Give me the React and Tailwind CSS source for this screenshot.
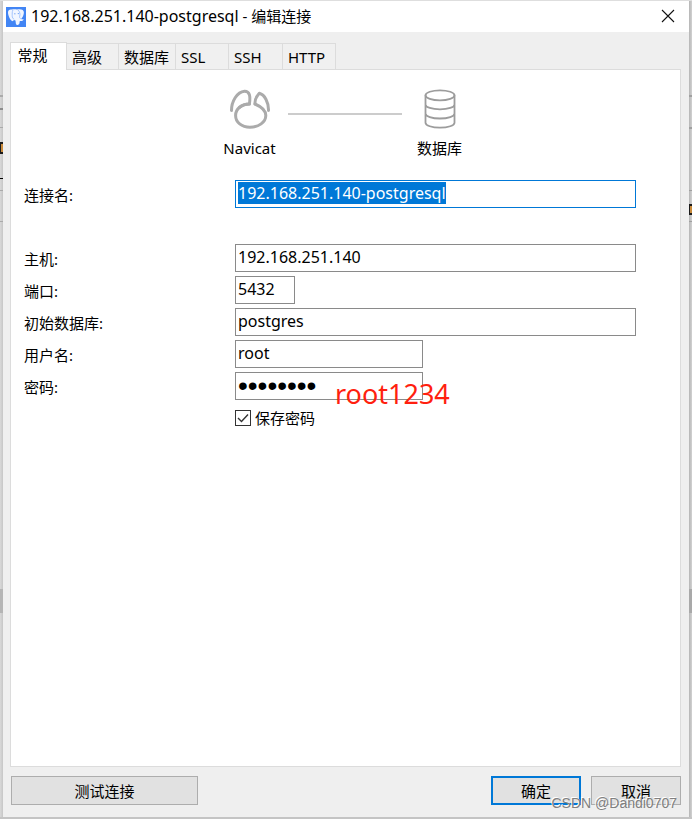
import React, { useEffect, useRef, useState } from "react";

const tabs = [
  { name: "高级", className: "w-[52px]" },
  { name: "数据库", className: "w-[57px]" },
  { name: "SSL", className: "w-[53px]" },
  { name: "SSH", className: "w-[54px]" },
  { name: "HTTP", className: "w-[53px]" },
];

const field =
  "h-7 border border-[#8a8a8a] bg-white pb-[2px] pl-[2px] text-[16px] leading-5 outline-none focus:border-[#0078d7] selection:bg-[#0078d7] selection:text-white";

const Row = ({ id, label, children }) => (
  <div className="flex items-center">
    <label htmlFor={id} className="w-[211px] shrink-0 pt-[2px]">
      {label}
    </label>
    {children}
  </div>
);

const ElephantIcon = () => (
  <svg width="20" height="20" viewBox="0 0 20 20" aria-hidden="true">
    <rect width="20" height="20" fill="#4285f4" />
    <path
      d="M2 5.5C2 3 3.6 2.2 6 2.6C7.8 2.1 9.6 2.1 11 2.6C14.5 1.8 18.2 2.5 17.9 5.8C17.6 8.6 16.4 10.8 15.2 12C16 12.6 17 12.3 17.8 12.2C17.2 13.8 15.4 14.3 13.8 14L13.4 16.6C13 18.4 10.3 18.5 9.9 16.8L9.5 13.4L8 13L6.6 14.2C4.2 13.4 2 8.5 2 5.5Z"
      fill="#f1f6ff"
    />
    <path
      d="M6.9 3C5.9 5 6.3 7 6.2 8.5C6.1 10.4 7 11.8 8.2 12.4M12 3C14 4.6 14.3 7.4 13.7 9.2C13.3 10.6 14 11.3 14.8 11.8"
      fill="none"
      stroke="#8fb7fb"
      strokeWidth="0.8"
    />
    <path d="M8.3 6.8h1.1M11.8 6.6h1" stroke="#4285f4" strokeWidth="0.9" />
  </svg>
);

const NavicatIcon = () => (
  <svg
    width="42"
    height="40"
    viewBox="0 0 42 40"
    fill="none"
    stroke="#ababab"
    strokeWidth="3"
    strokeLinecap="round"
    strokeLinejoin="round"
    aria-hidden="true"
  >
    <path d="M2.5 21.5C2.4 12.5 8 2.8 15.5 2.2C20.8 2 21.6 7.5 20.4 14.9C16.5 15 13 16.2 10.6 18.4" />
    <path d="M20.4 14.9C12.5 14.9 6.6 20 6.6 26.5C6.6 33.3 12.6 38.2 21 38.2C29.6 38.2 36.8 33.2 36.8 26.5C36.8 22.3 33 18 26 15" />
    <path d="M26 15C25.7 11 27.3 7.6 30.3 4.3C35.8 5.8 39.7 13.5 39.5 21.5" />
  </svg>
);

const DatabaseIcon = () => (
  <svg
    width="32"
    height="40"
    viewBox="0 0 32 40"
    fill="none"
    stroke="#9c9c9c"
    strokeWidth="1.8"
    aria-hidden="true"
  >
    <ellipse cx="16" cy="6.3" rx="14.5" ry="5" />
    <path d="M1.5 6.3v27.4c0 2.8 6.5 5 14.5 5s14.5-2.2 14.5-5V6.3M1.5 15.4c0 2.8 6.5 5 14.5 5s14.5-2.2 14.5-5M1.5 24.5c0 2.8 6.5 5 14.5 5s14.5-2.2 14.5-5" />
  </svg>
);

// slivers of the window behind the dialog
const LeftEdge = () => (
  <div className="flex w-[3px] shrink-0 flex-col bg-linear-to-r from-[#d9d9d9] to-[#c6c6c6]">
    <i className="mt-[94px] h-[2px] bg-[#aaa]" />
    <i className="mt-[11px] h-[2px] bg-[#8d8d8d]" />
    <i className="mt-[17px] h-px bg-[#aaa]" />
    <i className="mt-[14px] h-3 border-y-2 border-l border-[#1b1b1b] bg-[#c98b3c]" />
    <i className="mt-[24px] h-px bg-black" />
    <i className="mt-[11px] h-px bg-[#aaa]" />
    <i className="mt-[30px] h-px bg-[#aaa]" />
    <i className="mt-[367px] h-6 bg-[#b5b5b5]" />
  </div>
);

const RightEdge = () => (
  <div className="flex w-[3px] shrink-0 flex-col bg-linear-to-r from-[#b5b5b5] to-[#d2d2d2]">
    <i className="mt-[94px] h-[2px] bg-[#a0a0a0]" />
    <i className="mt-[30px] h-[2px] bg-[#a0a0a0]" />
    <i className="mt-[61px] h-px bg-[#a0a0a0]" />
    <i className="mt-[13px] h-[11px] border-y-2 border-l border-[#1b1b1b] bg-[#c98b3c]" />
    <i className="mt-[6px] h-px bg-[#a0a0a0]" />
    <i className="mt-[367px] h-6 bg-[#a9a9a9]" />
  </div>
);

const App = () => {
  const nameRef = useRef(null);
  const [form, setForm] = useState({
    name: "192.168.251.140-postgresql",
    host: "192.168.251.140",
    port: "5432",
    database: "postgres",
    user: "root",
    password: "root1234",
  });
  const [save, setSave] = useState(true);

  useEffect(() => {
    nameRef.current.focus();
    nameRef.current.select();
  }, []);

  const handleChange = (e) => {
    setForm({ ...form, [e.target.id]: e.target.value });
  };

  return (
    <div className="flex min-h-screen border-t border-b-2 border-t-[#dedede] border-b-[#c4c4c4] font-['Noto_Sans','Noto_Sans_CJK_SC',sans-serif] text-[15px] leading-5 text-black">
      <LeftEdge />
      <main className="flex grow flex-col bg-[#efefef]">
        <header className="flex h-[31px] items-center bg-white pr-[14px] pl-[3px]">
          <ElephantIcon />
          <h1 className="grow pb-[2px] pl-[5px]">
            <span className="text-[16px]">192.168.251.140-postgresql</span> - 编辑连接
          </h1>
          <button type="button" aria-label="关闭" className="pb-[2px]">
            <svg width="14" height="14" viewBox="0 0 14 14" stroke="#111" strokeWidth="1.1">
              <path d="M1 1l12 12M13 1L1 13" />
            </svg>
          </button>
        </header>

        <div className="flex grow flex-col pt-[10px] pr-[8px] pb-3 pl-[7px]">
          <nav className="flex items-end">
            <button
              type="button"
              className="z-10 -mb-px h-7 w-[57px] border border-b-0 border-[#dcdcdc] bg-white pr-3 pb-1"
            >
              常规
            </button>
            {tabs.map((tab) => (
              <button
                key={tab.name}
                type="button"
                className={`h-[26px] border-t border-r border-[#dcdcdc] bg-[#f0f0f0] pl-[5px] text-left ${tab.className}`}
              >
                {tab.name}
              </button>
            ))}
          </nav>

          <section className="grow border border-[#dcdcdc] bg-white pt-[19px]">
            <div className="flex justify-center pr-[2px]">
              <div className="flex w-[58px] flex-col items-center gap-[9px]">
                <NavicatIcon />
                <span>Navicat</span>
              </div>
              <div className="mx-[9px] mt-6 h-[2px] w-[114px] bg-[#cccccc]" />
              <div className="flex w-[58px] flex-col items-center gap-[9px]">
                <DatabaseIcon />
                <span>数据库</span>
              </div>
            </div>

            <form className="flex flex-col gap-1 pt-[22px] pr-[44px] pl-[13px]">
              <Row id="name" label="连接名:">
                <input id="name" ref={nameRef} value={form.name} onChange={handleChange} className={`${field} w-full`} />
              </Row>
              <div className="h-7" />
              <Row id="host" label="主机:">
                <input id="host" value={form.host} onChange={handleChange} className={`${field} w-full`} />
              </Row>
              <Row id="port" label="端口:">
                <input id="port" value={form.port} onChange={handleChange} className={`${field} w-[60px]`} />
              </Row>
              <Row id="database" label="初始数据库:">
                <input id="database" value={form.database} onChange={handleChange} className={`${field} w-full`} />
              </Row>
              <Row id="user" label="用户名:">
                <input id="user" value={form.user} onChange={handleChange} className={`${field} w-[188px]`} />
              </Row>
              <Row id="password" label="密码:">
                <div className="relative flex">
                  <input
                    id="password"
                    type="password"
                    value={form.password}
                    onChange={handleChange}
                    className="h-7 w-[188px] border border-[#8a8a8a] bg-white pl-[2px] font-['Liberation_Sans',sans-serif] text-[28px] leading-6 outline-none"
                  />
                  <span className="absolute top-1 left-[100px] text-[27px] leading-9 text-[#ff1f0f]">root1234</span>
                </div>
              </Row>
              <label className="ml-[211px] flex h-7 items-center gap-1">
                <input
                  type="checkbox"
                  checked={save}
                  onChange={() => setSave(!save)}
                  className="peer size-4 appearance-none border border-[#333] bg-white"
                />
                <svg
                  className="pointer-events-none invisible -ml-5 peer-checked:visible"
                  width="16"
                  height="16"
                  viewBox="0 0 16 16"
                  fill="none"
                  stroke="#333"
                  strokeWidth="1.4"
                >
                  <path d="M3 8l3.5 3.5L13 4.5" />
                </svg>
                保存密码
              </label>
            </form>
          </section>

          <footer className="relative flex gap-[10px] pt-[9px] pl-px">
            <button type="button" className="mr-auto h-[29px] w-[187px] border border-[#adadad] bg-[#e1e1e1]">
              测试连接
            </button>
            <button type="button" className="h-[29px] w-[90px] border-2 border-[#0078d7] bg-[#e1e1e1]">
              确定
            </button>
            <button type="button" className="h-[29px] w-[90px] border border-[#adadad] bg-[#e1e1e1]">
              取消
            </button>
            <span className="pointer-events-none absolute right-1 -bottom-2 font-['Liberation_Sans',sans-serif] text-[14px] text-[#808080] [text-shadow:-1px_-1px_0_#fff]">
              CSDN @Dandi0707
            </span>
          </footer>
        </div>
      </main>
      <RightEdge />
    </div>
  );
};

export default App;
